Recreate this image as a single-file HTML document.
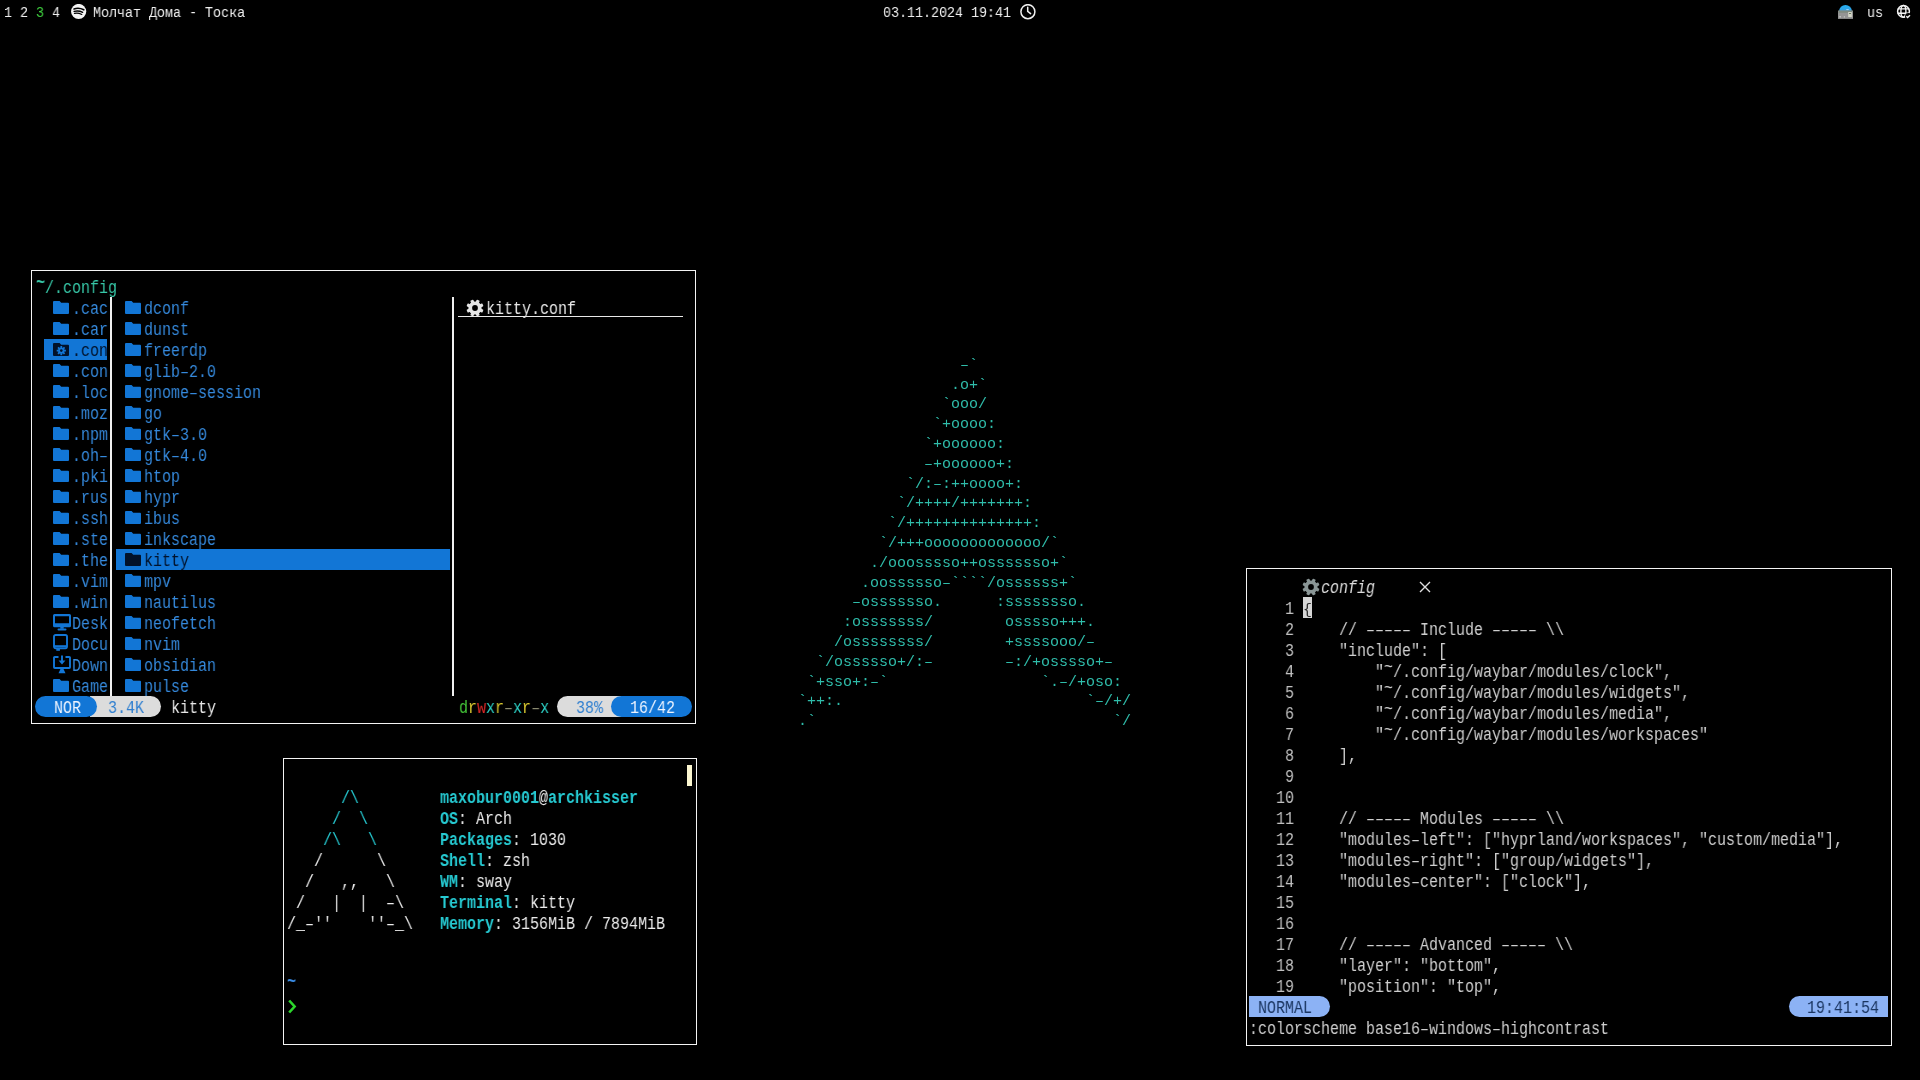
<!DOCTYPE html>
<html><head><meta charset="utf-8"><title>desktop</title>
<style>
html,body{margin:0;padding:0;background:#000;}
body{width:1920px;height:1080px;overflow:hidden;position:relative;font-family:"Liberation Mono", monospace;}
.t{position:absolute;white-space:pre;will-change:transform;font-family:"Liberation Mono", monospace;}
</style></head><body>

<div class="t" style="left:4px;top:1px;color:#f0f0f0;font-size:14.5px;line-height:24px;transform:scaleX(0.9195);transform-origin:0 0;">1 2 <span style="color:#3fd23f">3</span> 4</div>
<div class="t" style="left:93px;top:1px;color:#f0f0f0;font-size:14.5px;line-height:24px;transform:scaleX(0.9195);transform-origin:0 0;">Молчат Дома - Тоска</div>
<svg style="position:absolute;left:71px;top:4px;" width="16" height="16" viewBox="0 0 16 16"><circle cx="7.65" cy="7.5" r="7.6" fill="#f4f4f4"/><path d="M3 4.9 Q8 3.2 12.8 5.8" stroke="#000" stroke-width="1.6" fill="none" stroke-linecap="round"/><path d="M3.1 7.4 Q7.5 6.2 11.7 8.3" stroke="#000" stroke-width="1.35" fill="none" stroke-linecap="round"/><path d="M3.4 9.4 Q7 8.4 10.8 10.4" stroke="#000" stroke-width="1.15" fill="none" stroke-linecap="round"/></svg>
<div class="t" style="left:883px;top:1px;color:#f0f0f0;font-size:14.5px;line-height:24px;transform:scaleX(0.9195);transform-origin:0 0;">03.11.2024 19:41</div>
<svg style="position:absolute;left:1020px;top:4px;" width="16" height="16" viewBox="0 0 16 16"><circle cx="7.9" cy="7.65" r="7.0" stroke="#f0f0f0" stroke-width="1.5" fill="none"/><path d="M7.7 3.2 V7.3 L10.6 9.6" stroke="#f0f0f0" stroke-width="1.5" fill="none" stroke-linecap="round"/></svg>
<svg style="position:absolute;left:1837px;top:3px;" width="17" height="17" viewBox="0 0 17 17"><defs><linearGradient id="sky" x1="0" y1="0" x2="0" y2="1"><stop offset="0" stop-color="#22aef0"/><stop offset="1" stop-color="#4a8fd0"/></linearGradient></defs><circle cx="8.5" cy="8.4" r="6.4" fill="url(#sky)"/><ellipse cx="10.5" cy="6.6" rx="1.6" ry="0.6" fill="#9cd0f8"/><rect x="1" y="7.6" width="15" height="8.3" fill="#949494"/><rect x="1.5" y="7.6" width="14" height="2.2" fill="#7f8a80"/><rect x="11.2" y="9" width="3.6" height="5" fill="#d4d6c8"/><rect x="12" y="10" width="2" height="1" fill="#6a7a60"/><rect x="2.5" y="13.2" width="1.2" height="1.2" fill="#e0e0e0"/><rect x="6.8" y="13.4" width="1.2" height="1" fill="#d0d0d0"/></svg>
<div class="t" style="left:1867px;top:1px;color:#f0f0f0;font-size:14.5px;line-height:24px;transform:scaleX(0.9195);transform-origin:0 0;">us</div>
<svg style="position:absolute;left:1894px;top:2px;" width="20" height="20" viewBox="0 0 20 20"><circle cx="9.5" cy="9.35" r="5.9" stroke="#f4f4f4" stroke-width="1.5" fill="none"/><ellipse cx="9.4" cy="9.35" rx="2.5" ry="5.9" stroke="#f4f4f4" stroke-width="1.4" fill="none"/><path d="M3.8 6.9 H15.2 M3.6 11.3 H15.4" stroke="#f4f4f4" stroke-width="1.4"/><circle cx="14.4" cy="14.4" r="3.3" fill="#000"/><path d="M12.3 14.3 L13.6 15.6 L16 13.2" stroke="#f4f4f4" stroke-width="1.4" fill="none"/></svg>
<div style="position:absolute;left:31px;top:270px;width:665px;height:454px;box-sizing:border-box;border:1px solid #f4f4f4;"></div>
<div class="t" style="left:36px;top:278px;color:#37c8a8;font-size:17.5px;line-height:21px;transform:scaleX(0.85714);transform-origin:0 0;"><span style="position:relative;top:-5px;font-weight:bold">~</span>/.config</div>
<svg style="position:absolute;left:53px;top:301px;" width="16" height="13" viewBox="0 0 16 13"><path d="M0 1 Q0 0 1 0 H6.6 L8.2 1.8 H15 Q16 1.8 16 2.8 V12 Q16 13 15 13 H1 Q0 13 0 12 Z" fill="#1276d6"/></svg>
<div class="t" style="left:72px;top:299px;color:#3589dc;font-size:17.5px;line-height:21px;transform:scaleX(0.85714);transform-origin:0 0;">.cac</div>
<svg style="position:absolute;left:53px;top:322px;" width="16" height="13" viewBox="0 0 16 13"><path d="M0 1 Q0 0 1 0 H6.6 L8.2 1.8 H15 Q16 1.8 16 2.8 V12 Q16 13 15 13 H1 Q0 13 0 12 Z" fill="#1276d6"/></svg>
<div class="t" style="left:72px;top:320px;color:#3589dc;font-size:17.5px;line-height:21px;transform:scaleX(0.85714);transform-origin:0 0;">.car</div>
<div style="position:absolute;left:44px;top:339px;width:63px;height:21px;background:#1276d6;"></div>
<svg style="position:absolute;left:53px;top:343px;" width="16" height="14" viewBox="0 0 16 14"><path d="M0 1 Q0 0 1 0 H6.6 L8.2 1.8 H15 Q16 1.8 16 2.8 V12 Q16 13 15 13 H1 Q0 13 0 12 Z" fill="#02122a"/><g transform="translate(8.3 7.6)"><circle r="3.2" fill="#1276d6"/><rect x="-0.9" y="-4.6" width="1.8" height="2" fill="#1276d6" transform="rotate(0)"/><rect x="-0.9" y="-4.6" width="1.8" height="2" fill="#1276d6" transform="rotate(45)"/><rect x="-0.9" y="-4.6" width="1.8" height="2" fill="#1276d6" transform="rotate(90)"/><rect x="-0.9" y="-4.6" width="1.8" height="2" fill="#1276d6" transform="rotate(135)"/><rect x="-0.9" y="-4.6" width="1.8" height="2" fill="#1276d6" transform="rotate(180)"/><rect x="-0.9" y="-4.6" width="1.8" height="2" fill="#1276d6" transform="rotate(225)"/><rect x="-0.9" y="-4.6" width="1.8" height="2" fill="#1276d6" transform="rotate(270)"/><rect x="-0.9" y="-4.6" width="1.8" height="2" fill="#1276d6" transform="rotate(315)"/><circle r="1.3" fill="#02122a"/></g></svg>
<div class="t" style="left:72px;top:341px;color:#02122a;font-size:17.5px;line-height:21px;transform:scaleX(0.85714);transform-origin:0 0;">.con</div>
<svg style="position:absolute;left:53px;top:364px;" width="16" height="13" viewBox="0 0 16 13"><path d="M0 1 Q0 0 1 0 H6.6 L8.2 1.8 H15 Q16 1.8 16 2.8 V12 Q16 13 15 13 H1 Q0 13 0 12 Z" fill="#1276d6"/></svg>
<div class="t" style="left:72px;top:362px;color:#3589dc;font-size:17.5px;line-height:21px;transform:scaleX(0.85714);transform-origin:0 0;">.con</div>
<svg style="position:absolute;left:53px;top:385px;" width="16" height="13" viewBox="0 0 16 13"><path d="M0 1 Q0 0 1 0 H6.6 L8.2 1.8 H15 Q16 1.8 16 2.8 V12 Q16 13 15 13 H1 Q0 13 0 12 Z" fill="#1276d6"/></svg>
<div class="t" style="left:72px;top:383px;color:#3589dc;font-size:17.5px;line-height:21px;transform:scaleX(0.85714);transform-origin:0 0;">.loc</div>
<svg style="position:absolute;left:53px;top:406px;" width="16" height="13" viewBox="0 0 16 13"><path d="M0 1 Q0 0 1 0 H6.6 L8.2 1.8 H15 Q16 1.8 16 2.8 V12 Q16 13 15 13 H1 Q0 13 0 12 Z" fill="#1276d6"/></svg>
<div class="t" style="left:72px;top:404px;color:#3589dc;font-size:17.5px;line-height:21px;transform:scaleX(0.85714);transform-origin:0 0;">.moz</div>
<svg style="position:absolute;left:53px;top:427px;" width="16" height="13" viewBox="0 0 16 13"><path d="M0 1 Q0 0 1 0 H6.6 L8.2 1.8 H15 Q16 1.8 16 2.8 V12 Q16 13 15 13 H1 Q0 13 0 12 Z" fill="#1276d6"/></svg>
<div class="t" style="left:72px;top:425px;color:#3589dc;font-size:17.5px;line-height:21px;transform:scaleX(0.85714);transform-origin:0 0;">.npm</div>
<svg style="position:absolute;left:53px;top:448px;" width="16" height="13" viewBox="0 0 16 13"><path d="M0 1 Q0 0 1 0 H6.6 L8.2 1.8 H15 Q16 1.8 16 2.8 V12 Q16 13 15 13 H1 Q0 13 0 12 Z" fill="#1276d6"/></svg>
<div class="t" style="left:72px;top:446px;color:#3589dc;font-size:17.5px;line-height:21px;transform:scaleX(0.85714);transform-origin:0 0;">.oh–</div>
<svg style="position:absolute;left:53px;top:469px;" width="16" height="13" viewBox="0 0 16 13"><path d="M0 1 Q0 0 1 0 H6.6 L8.2 1.8 H15 Q16 1.8 16 2.8 V12 Q16 13 15 13 H1 Q0 13 0 12 Z" fill="#1276d6"/></svg>
<div class="t" style="left:72px;top:467px;color:#3589dc;font-size:17.5px;line-height:21px;transform:scaleX(0.85714);transform-origin:0 0;">.pki</div>
<svg style="position:absolute;left:53px;top:490px;" width="16" height="13" viewBox="0 0 16 13"><path d="M0 1 Q0 0 1 0 H6.6 L8.2 1.8 H15 Q16 1.8 16 2.8 V12 Q16 13 15 13 H1 Q0 13 0 12 Z" fill="#1276d6"/></svg>
<div class="t" style="left:72px;top:488px;color:#3589dc;font-size:17.5px;line-height:21px;transform:scaleX(0.85714);transform-origin:0 0;">.rus</div>
<svg style="position:absolute;left:53px;top:511px;" width="16" height="13" viewBox="0 0 16 13"><path d="M0 1 Q0 0 1 0 H6.6 L8.2 1.8 H15 Q16 1.8 16 2.8 V12 Q16 13 15 13 H1 Q0 13 0 12 Z" fill="#1276d6"/></svg>
<div class="t" style="left:72px;top:509px;color:#3589dc;font-size:17.5px;line-height:21px;transform:scaleX(0.85714);transform-origin:0 0;">.ssh</div>
<svg style="position:absolute;left:53px;top:532px;" width="16" height="13" viewBox="0 0 16 13"><path d="M0 1 Q0 0 1 0 H6.6 L8.2 1.8 H15 Q16 1.8 16 2.8 V12 Q16 13 15 13 H1 Q0 13 0 12 Z" fill="#1276d6"/></svg>
<div class="t" style="left:72px;top:530px;color:#3589dc;font-size:17.5px;line-height:21px;transform:scaleX(0.85714);transform-origin:0 0;">.ste</div>
<svg style="position:absolute;left:53px;top:553px;" width="16" height="13" viewBox="0 0 16 13"><path d="M0 1 Q0 0 1 0 H6.6 L8.2 1.8 H15 Q16 1.8 16 2.8 V12 Q16 13 15 13 H1 Q0 13 0 12 Z" fill="#1276d6"/></svg>
<div class="t" style="left:72px;top:551px;color:#3589dc;font-size:17.5px;line-height:21px;transform:scaleX(0.85714);transform-origin:0 0;">.the</div>
<svg style="position:absolute;left:53px;top:574px;" width="16" height="13" viewBox="0 0 16 13"><path d="M0 1 Q0 0 1 0 H6.6 L8.2 1.8 H15 Q16 1.8 16 2.8 V12 Q16 13 15 13 H1 Q0 13 0 12 Z" fill="#1276d6"/></svg>
<div class="t" style="left:72px;top:572px;color:#3589dc;font-size:17.5px;line-height:21px;transform:scaleX(0.85714);transform-origin:0 0;">.vim</div>
<svg style="position:absolute;left:53px;top:595px;" width="16" height="13" viewBox="0 0 16 13"><path d="M0 1 Q0 0 1 0 H6.6 L8.2 1.8 H15 Q16 1.8 16 2.8 V12 Q16 13 15 13 H1 Q0 13 0 12 Z" fill="#1276d6"/></svg>
<div class="t" style="left:72px;top:593px;color:#3589dc;font-size:17.5px;line-height:21px;transform:scaleX(0.85714);transform-origin:0 0;">.win</div>
<svg style="position:absolute;left:53px;top:614px;" width="18" height="17" viewBox="0 0 18 17"><path fill-rule="evenodd" d="M1.5 0 H16.5 Q18 0 18 1.5 V11.7 Q18 13.2 16.5 13.2 H1.5 Q0 13.2 0 11.7 V1.5 Q0 0 1.5 0 Z M2 2.2 V9.2 H16 V2.2 Z" fill="#1276d6"/><rect x="7.3" y="13" width="3.4" height="1.8" fill="#1276d6"/><rect x="4.5" y="14.6" width="9" height="2" rx="1" fill="#1276d6"/></svg>
<div class="t" style="left:72px;top:614px;color:#3589dc;font-size:17.5px;line-height:21px;transform:scaleX(0.85714);transform-origin:0 0;">Desk</div>
<svg style="position:absolute;left:53px;top:634px;" width="18" height="18" viewBox="0 0 18 18"><rect x="1" y="1" width="13" height="13.2" rx="1.6" fill="none" stroke="#1276d6" stroke-width="1.9"/><rect x="1" y="11.2" width="13" height="1.8" fill="#1276d6"/><rect x="3.3" y="14.4" width="3.6" height="2.4" fill="#1276d6"/></svg>
<div class="t" style="left:72px;top:635px;color:#3589dc;font-size:17.5px;line-height:21px;transform:scaleX(0.85714);transform-origin:0 0;">Docu</div>
<svg style="position:absolute;left:53px;top:655px;" width="18" height="19" viewBox="0 0 18 19"><path d="M5.5 2 H1.8 Q1 2 1 2.8 V12.2 Q1 13 1.8 13 H16.2 Q17 13 17 12.2 V2.8 Q17 2 16.2 2 H12.5" fill="none" stroke="#1276d6" stroke-width="1.9"/><path d="M9 0.5 V7.5" stroke="#1276d6" stroke-width="1.9"/><path d="M5.6 5.6 L9 9.4 L12.4 5.6 Z" fill="#1276d6"/><path d="M5.5 18.2 H12.5 L10.3 13.5 H7.7 Z" fill="#1276d6"/></svg>
<div class="t" style="left:72px;top:656px;color:#3589dc;font-size:17.5px;line-height:21px;transform:scaleX(0.85714);transform-origin:0 0;">Down</div>
<svg style="position:absolute;left:53px;top:679px;" width="16" height="13" viewBox="0 0 16 13"><path d="M0 1 Q0 0 1 0 H6.6 L8.2 1.8 H15 Q16 1.8 16 2.8 V12 Q16 13 15 13 H1 Q0 13 0 12 Z" fill="#1276d6"/></svg>
<div class="t" style="left:72px;top:677px;color:#3589dc;font-size:17.5px;line-height:21px;transform:scaleX(0.85714);transform-origin:0 0;">Game</div>
<div style="position:absolute;left:110px;top:297px;width:2px;height:399px;background:#f0f0f0;"></div>
<div style="position:absolute;left:452px;top:297px;width:2px;height:399px;background:#f0f0f0;"></div>
<svg style="position:absolute;left:125px;top:301px;" width="16" height="13" viewBox="0 0 16 13"><path d="M0 1 Q0 0 1 0 H6.6 L8.2 1.8 H15 Q16 1.8 16 2.8 V12 Q16 13 15 13 H1 Q0 13 0 12 Z" fill="#1276d6"/></svg>
<div class="t" style="left:144px;top:299px;color:#3589dc;font-size:17.5px;line-height:21px;transform:scaleX(0.85714);transform-origin:0 0;">dconf</div>
<svg style="position:absolute;left:125px;top:322px;" width="16" height="13" viewBox="0 0 16 13"><path d="M0 1 Q0 0 1 0 H6.6 L8.2 1.8 H15 Q16 1.8 16 2.8 V12 Q16 13 15 13 H1 Q0 13 0 12 Z" fill="#1276d6"/></svg>
<div class="t" style="left:144px;top:320px;color:#3589dc;font-size:17.5px;line-height:21px;transform:scaleX(0.85714);transform-origin:0 0;">dunst</div>
<svg style="position:absolute;left:125px;top:343px;" width="16" height="13" viewBox="0 0 16 13"><path d="M0 1 Q0 0 1 0 H6.6 L8.2 1.8 H15 Q16 1.8 16 2.8 V12 Q16 13 15 13 H1 Q0 13 0 12 Z" fill="#1276d6"/></svg>
<div class="t" style="left:144px;top:341px;color:#3589dc;font-size:17.5px;line-height:21px;transform:scaleX(0.85714);transform-origin:0 0;">freerdp</div>
<svg style="position:absolute;left:125px;top:364px;" width="16" height="13" viewBox="0 0 16 13"><path d="M0 1 Q0 0 1 0 H6.6 L8.2 1.8 H15 Q16 1.8 16 2.8 V12 Q16 13 15 13 H1 Q0 13 0 12 Z" fill="#1276d6"/></svg>
<div class="t" style="left:144px;top:362px;color:#3589dc;font-size:17.5px;line-height:21px;transform:scaleX(0.85714);transform-origin:0 0;">glib–2.0</div>
<svg style="position:absolute;left:125px;top:385px;" width="16" height="13" viewBox="0 0 16 13"><path d="M0 1 Q0 0 1 0 H6.6 L8.2 1.8 H15 Q16 1.8 16 2.8 V12 Q16 13 15 13 H1 Q0 13 0 12 Z" fill="#1276d6"/></svg>
<div class="t" style="left:144px;top:383px;color:#3589dc;font-size:17.5px;line-height:21px;transform:scaleX(0.85714);transform-origin:0 0;">gnome–session</div>
<svg style="position:absolute;left:125px;top:406px;" width="16" height="13" viewBox="0 0 16 13"><path d="M0 1 Q0 0 1 0 H6.6 L8.2 1.8 H15 Q16 1.8 16 2.8 V12 Q16 13 15 13 H1 Q0 13 0 12 Z" fill="#1276d6"/></svg>
<div class="t" style="left:144px;top:404px;color:#3589dc;font-size:17.5px;line-height:21px;transform:scaleX(0.85714);transform-origin:0 0;">go</div>
<svg style="position:absolute;left:125px;top:427px;" width="16" height="13" viewBox="0 0 16 13"><path d="M0 1 Q0 0 1 0 H6.6 L8.2 1.8 H15 Q16 1.8 16 2.8 V12 Q16 13 15 13 H1 Q0 13 0 12 Z" fill="#1276d6"/></svg>
<div class="t" style="left:144px;top:425px;color:#3589dc;font-size:17.5px;line-height:21px;transform:scaleX(0.85714);transform-origin:0 0;">gtk–3.0</div>
<svg style="position:absolute;left:125px;top:448px;" width="16" height="13" viewBox="0 0 16 13"><path d="M0 1 Q0 0 1 0 H6.6 L8.2 1.8 H15 Q16 1.8 16 2.8 V12 Q16 13 15 13 H1 Q0 13 0 12 Z" fill="#1276d6"/></svg>
<div class="t" style="left:144px;top:446px;color:#3589dc;font-size:17.5px;line-height:21px;transform:scaleX(0.85714);transform-origin:0 0;">gtk–4.0</div>
<svg style="position:absolute;left:125px;top:469px;" width="16" height="13" viewBox="0 0 16 13"><path d="M0 1 Q0 0 1 0 H6.6 L8.2 1.8 H15 Q16 1.8 16 2.8 V12 Q16 13 15 13 H1 Q0 13 0 12 Z" fill="#1276d6"/></svg>
<div class="t" style="left:144px;top:467px;color:#3589dc;font-size:17.5px;line-height:21px;transform:scaleX(0.85714);transform-origin:0 0;">htop</div>
<svg style="position:absolute;left:125px;top:490px;" width="16" height="13" viewBox="0 0 16 13"><path d="M0 1 Q0 0 1 0 H6.6 L8.2 1.8 H15 Q16 1.8 16 2.8 V12 Q16 13 15 13 H1 Q0 13 0 12 Z" fill="#1276d6"/></svg>
<div class="t" style="left:144px;top:488px;color:#3589dc;font-size:17.5px;line-height:21px;transform:scaleX(0.85714);transform-origin:0 0;">hypr</div>
<svg style="position:absolute;left:125px;top:511px;" width="16" height="13" viewBox="0 0 16 13"><path d="M0 1 Q0 0 1 0 H6.6 L8.2 1.8 H15 Q16 1.8 16 2.8 V12 Q16 13 15 13 H1 Q0 13 0 12 Z" fill="#1276d6"/></svg>
<div class="t" style="left:144px;top:509px;color:#3589dc;font-size:17.5px;line-height:21px;transform:scaleX(0.85714);transform-origin:0 0;">ibus</div>
<svg style="position:absolute;left:125px;top:532px;" width="16" height="13" viewBox="0 0 16 13"><path d="M0 1 Q0 0 1 0 H6.6 L8.2 1.8 H15 Q16 1.8 16 2.8 V12 Q16 13 15 13 H1 Q0 13 0 12 Z" fill="#1276d6"/></svg>
<div class="t" style="left:144px;top:530px;color:#3589dc;font-size:17.5px;line-height:21px;transform:scaleX(0.85714);transform-origin:0 0;">inkscape</div>
<div style="position:absolute;left:116px;top:549px;width:334px;height:21px;background:#1276d6;"></div>
<svg style="position:absolute;left:125px;top:553px;" width="16" height="13" viewBox="0 0 16 13"><path d="M0 1 Q0 0 1 0 H6.6 L8.2 1.8 H15 Q16 1.8 16 2.8 V12 Q16 13 15 13 H1 Q0 13 0 12 Z" fill="#02122a"/></svg>
<div class="t" style="left:144px;top:551px;color:#02122a;font-size:17.5px;line-height:21px;transform:scaleX(0.85714);transform-origin:0 0;">kitty</div>
<svg style="position:absolute;left:125px;top:574px;" width="16" height="13" viewBox="0 0 16 13"><path d="M0 1 Q0 0 1 0 H6.6 L8.2 1.8 H15 Q16 1.8 16 2.8 V12 Q16 13 15 13 H1 Q0 13 0 12 Z" fill="#1276d6"/></svg>
<div class="t" style="left:144px;top:572px;color:#3589dc;font-size:17.5px;line-height:21px;transform:scaleX(0.85714);transform-origin:0 0;">mpv</div>
<svg style="position:absolute;left:125px;top:595px;" width="16" height="13" viewBox="0 0 16 13"><path d="M0 1 Q0 0 1 0 H6.6 L8.2 1.8 H15 Q16 1.8 16 2.8 V12 Q16 13 15 13 H1 Q0 13 0 12 Z" fill="#1276d6"/></svg>
<div class="t" style="left:144px;top:593px;color:#3589dc;font-size:17.5px;line-height:21px;transform:scaleX(0.85714);transform-origin:0 0;">nautilus</div>
<svg style="position:absolute;left:125px;top:616px;" width="16" height="13" viewBox="0 0 16 13"><path d="M0 1 Q0 0 1 0 H6.6 L8.2 1.8 H15 Q16 1.8 16 2.8 V12 Q16 13 15 13 H1 Q0 13 0 12 Z" fill="#1276d6"/></svg>
<div class="t" style="left:144px;top:614px;color:#3589dc;font-size:17.5px;line-height:21px;transform:scaleX(0.85714);transform-origin:0 0;">neofetch</div>
<svg style="position:absolute;left:125px;top:637px;" width="16" height="13" viewBox="0 0 16 13"><path d="M0 1 Q0 0 1 0 H6.6 L8.2 1.8 H15 Q16 1.8 16 2.8 V12 Q16 13 15 13 H1 Q0 13 0 12 Z" fill="#1276d6"/></svg>
<div class="t" style="left:144px;top:635px;color:#3589dc;font-size:17.5px;line-height:21px;transform:scaleX(0.85714);transform-origin:0 0;">nvim</div>
<svg style="position:absolute;left:125px;top:658px;" width="16" height="13" viewBox="0 0 16 13"><path d="M0 1 Q0 0 1 0 H6.6 L8.2 1.8 H15 Q16 1.8 16 2.8 V12 Q16 13 15 13 H1 Q0 13 0 12 Z" fill="#1276d6"/></svg>
<div class="t" style="left:144px;top:656px;color:#3589dc;font-size:17.5px;line-height:21px;transform:scaleX(0.85714);transform-origin:0 0;">obsidian</div>
<svg style="position:absolute;left:125px;top:679px;" width="16" height="13" viewBox="0 0 16 13"><path d="M0 1 Q0 0 1 0 H6.6 L8.2 1.8 H15 Q16 1.8 16 2.8 V12 Q16 13 15 13 H1 Q0 13 0 12 Z" fill="#1276d6"/></svg>
<div class="t" style="left:144px;top:677px;color:#3589dc;font-size:17.5px;line-height:21px;transform:scaleX(0.85714);transform-origin:0 0;">pulse</div>
<svg style="position:absolute;left:465.3px;top:297.6px;" width="20" height="20" viewBox="0 0 20 20"><g transform="translate(10 10)"><circle r="6.6" fill="#e6e6e6"/><rect x="-1.65" y="-8.5" width="3.3" height="3.1000000000000005" rx="0.7" fill="#e6e6e6" transform="rotate(22.5)"/><rect x="-1.65" y="-8.5" width="3.3" height="3.1000000000000005" rx="0.7" fill="#e6e6e6" transform="rotate(67.5)"/><rect x="-1.65" y="-8.5" width="3.3" height="3.1000000000000005" rx="0.7" fill="#e6e6e6" transform="rotate(112.5)"/><rect x="-1.65" y="-8.5" width="3.3" height="3.1000000000000005" rx="0.7" fill="#e6e6e6" transform="rotate(157.5)"/><rect x="-1.65" y="-8.5" width="3.3" height="3.1000000000000005" rx="0.7" fill="#e6e6e6" transform="rotate(202.5)"/><rect x="-1.65" y="-8.5" width="3.3" height="3.1000000000000005" rx="0.7" fill="#e6e6e6" transform="rotate(247.5)"/><rect x="-1.65" y="-8.5" width="3.3" height="3.1000000000000005" rx="0.7" fill="#e6e6e6" transform="rotate(292.5)"/><rect x="-1.65" y="-8.5" width="3.3" height="3.1000000000000005" rx="0.7" fill="#e6e6e6" transform="rotate(337.5)"/><circle r="2.9" fill="#000"/></g></svg>
<div class="t" style="left:486px;top:299px;color:#e8e8e8;font-size:17.5px;line-height:21px;transform:scaleX(0.85714);transform-origin:0 0;">kitty.conf</div>
<div style="position:absolute;left:458px;top:316px;width:225px;height:1px;background:#e8e8e8;"></div>
<div style="position:absolute;left:90px;top:696px;width:71px;height:21px;background:#dcdcdc;border-radius:0 10.5px 10.5px 0;"></div>
<div style="position:absolute;left:35px;top:696px;width:62px;height:21px;background:#1276d6;border-radius:10.5px;"></div>
<div class="t" style="left:54px;top:698px;color:#eef4ff;font-size:17.5px;line-height:21px;transform:scaleX(0.85714);transform-origin:0 0;">NOR</div>
<div class="t" style="left:108px;top:698px;color:#2f7fd0;font-size:17.5px;line-height:21px;transform:scaleX(0.85714);transform-origin:0 0;">3.4K</div>
<div class="t" style="left:171px;top:698px;color:#e8e8e8;font-size:17.5px;line-height:21px;transform:scaleX(0.85714);transform-origin:0 0;">kitty</div>
<div class="t" style="left:459px;top:698px;color:#e0e0e0;font-size:17.5px;line-height:21px;transform:scaleX(0.85714);transform-origin:0 0;"><span style="color:#45c83a">d</span><span style="color:#d8c830">r</span><span style="color:#e02828">w</span><span style="color:#2ccfc4">x</span><span style="color:#d8c830">r</span><span style="color:#8a8a70">–</span><span style="color:#2ccfc4">x</span><span style="color:#d8c830">r</span><span style="color:#8a8a70">–</span><span style="color:#2ccfc4">x</span></div>
<div style="position:absolute;left:557px;top:696px;width:70px;height:21px;background:#dcdcdc;border-radius:10.5px 0 0 10.5px;"></div>
<div style="position:absolute;left:611px;top:696px;width:81px;height:21px;background:#1276d6;border-radius:10.5px;"></div>
<div class="t" style="left:576px;top:698px;color:#2f7fd0;font-size:17.5px;line-height:21px;transform:scaleX(0.85714);transform-origin:0 0;">38%</div>
<div class="t" style="left:630px;top:698px;color:#eef4ff;font-size:17.5px;line-height:21px;transform:scaleX(0.85714);transform-origin:0 0;">16/42</div>
<div class="t" style="left:789px;top:354.7px;color:#2fbcaa;font-size:15px;line-height:21px;">                   –`</div>
<div class="t" style="left:789px;top:374.5px;color:#2fbcaa;font-size:15px;line-height:21px;">                  .o+`</div>
<div class="t" style="left:789px;top:394.3px;color:#2fbcaa;font-size:15px;line-height:21px;">                 `ooo/</div>
<div class="t" style="left:789px;top:414.1px;color:#2fbcaa;font-size:15px;line-height:21px;">                `+oooo:</div>
<div class="t" style="left:789px;top:433.9px;color:#2fbcaa;font-size:15px;line-height:21px;">               `+oooooo:</div>
<div class="t" style="left:789px;top:453.7px;color:#2fbcaa;font-size:15px;line-height:21px;">               –+oooooo+:</div>
<div class="t" style="left:789px;top:473.5px;color:#2fbcaa;font-size:15px;line-height:21px;">             `/:–:++oooo+:</div>
<div class="t" style="left:789px;top:493.3px;color:#2fbcaa;font-size:15px;line-height:21px;">            `/++++/+++++++:</div>
<div class="t" style="left:789px;top:513.1px;color:#2fbcaa;font-size:15px;line-height:21px;">           `/++++++++++++++:</div>
<div class="t" style="left:789px;top:532.9px;color:#2fbcaa;font-size:15px;line-height:21px;">          `/+++ooooooooooooo/`</div>
<div class="t" style="left:789px;top:552.7px;color:#2fbcaa;font-size:15px;line-height:21px;">         ./ooosssso++osssssso+`</div>
<div class="t" style="left:789px;top:572.5px;color:#2fbcaa;font-size:15px;line-height:21px;">        .oossssso–````/ossssss+`</div>
<div class="t" style="left:789px;top:592.3px;color:#2fbcaa;font-size:15px;line-height:21px;">       –osssssso.      :ssssssso.</div>
<div class="t" style="left:789px;top:612.1px;color:#2fbcaa;font-size:15px;line-height:21px;">      :osssssss/        osssso+++.</div>
<div class="t" style="left:789px;top:631.9px;color:#2fbcaa;font-size:15px;line-height:21px;">     /ossssssss/        +ssssooo/–</div>
<div class="t" style="left:789px;top:651.7px;color:#2fbcaa;font-size:15px;line-height:21px;">   `/ossssso+/:–        –:/+osssso+–</div>
<div class="t" style="left:789px;top:671.5px;color:#2fbcaa;font-size:15px;line-height:21px;">  `+sso+:–`                 `.–/+oso:</div>
<div class="t" style="left:789px;top:691.3px;color:#2fbcaa;font-size:15px;line-height:21px;"> `++:.                           `–/+/</div>
<div class="t" style="left:789px;top:711.1px;color:#2fbcaa;font-size:15px;line-height:21px;"> .`                                 `/</div>
<div style="position:absolute;left:283px;top:758px;width:414px;height:287px;box-sizing:border-box;border:1px solid #f4f4f4;"></div>
<div style="position:absolute;left:687px;top:765px;width:5px;height:21px;background:#fbf6d0;"></div>
<div class="t" style="left:287px;top:788px;color:#26cad2;font-size:17.5px;line-height:21px;transform:scaleX(0.85714);transform-origin:0 0;">      /\</div>
<div class="t" style="left:287px;top:809px;color:#26cad2;font-size:17.5px;line-height:21px;transform:scaleX(0.85714);transform-origin:0 0;">     /  \</div>
<div class="t" style="left:287px;top:830px;color:#26cad2;font-size:17.5px;line-height:21px;transform:scaleX(0.85714);transform-origin:0 0;">    /\   \</div>
<div class="t" style="left:287px;top:851px;color:#ececec;font-size:17.5px;line-height:21px;transform:scaleX(0.85714);transform-origin:0 0;">   /      \</div>
<div class="t" style="left:287px;top:872px;color:#ececec;font-size:17.5px;line-height:21px;transform:scaleX(0.85714);transform-origin:0 0;">  /   ,,   \</div>
<div class="t" style="left:287px;top:893px;color:#ececec;font-size:17.5px;line-height:21px;transform:scaleX(0.85714);transform-origin:0 0;"> /   |  |  –\</div>
<div class="t" style="left:287px;top:914px;color:#ececec;font-size:17.5px;line-height:21px;transform:scaleX(0.85714);transform-origin:0 0;">/_–''    ''–_\</div>
<div class="t" style="left:440px;top:788px;color:#e0e0e0;font-size:17.5px;line-height:21px;transform:scaleX(0.85714);transform-origin:0 0;"><span style="color:#26cad2;font-weight:bold">maxobur0001</span><span style="color:#ececec">@</span><span style="color:#26cad2;font-weight:bold">archkisser</span></div>
<div class="t" style="left:440px;top:809px;color:#e0e0e0;font-size:17.5px;line-height:21px;transform:scaleX(0.85714);transform-origin:0 0;"><span style="color:#26cad2;font-weight:bold">OS</span><span style="color:#ececec">: Arch</span></div>
<div class="t" style="left:440px;top:830px;color:#e0e0e0;font-size:17.5px;line-height:21px;transform:scaleX(0.85714);transform-origin:0 0;"><span style="color:#26cad2;font-weight:bold">Packages</span><span style="color:#ececec">: 1030</span></div>
<div class="t" style="left:440px;top:851px;color:#e0e0e0;font-size:17.5px;line-height:21px;transform:scaleX(0.85714);transform-origin:0 0;"><span style="color:#26cad2;font-weight:bold">Shell</span><span style="color:#ececec">: zsh</span></div>
<div class="t" style="left:440px;top:872px;color:#e0e0e0;font-size:17.5px;line-height:21px;transform:scaleX(0.85714);transform-origin:0 0;"><span style="color:#26cad2;font-weight:bold">WM</span><span style="color:#ececec">: sway</span></div>
<div class="t" style="left:440px;top:893px;color:#e0e0e0;font-size:17.5px;line-height:21px;transform:scaleX(0.85714);transform-origin:0 0;"><span style="color:#26cad2;font-weight:bold">Terminal</span><span style="color:#ececec">: kitty</span></div>
<div class="t" style="left:440px;top:914px;color:#e0e0e0;font-size:17.5px;line-height:21px;transform:scaleX(0.85714);transform-origin:0 0;"><span style="color:#26cad2;font-weight:bold">Memory</span><span style="color:#ececec">: 3156MiB / 7894MiB</span></div>
<div class="t" style="left:287px;top:977px;color:#3b8ee8;font-size:17.5px;line-height:21px;transform:scaleX(0.85714);transform-origin:0 0;"><span style="position:relative;top:-5px;font-weight:bold">~</span></div>
<svg style="position:absolute;left:287px;top:999px;" width="10" height="15" viewBox="0 0 10 15"><path d="M2.2 1.5 L7.6 7.5 L2.2 13.5" stroke="#2cd62c" stroke-width="2.6" fill="none" stroke-linejoin="miter"/></svg>
<div style="position:absolute;left:1246px;top:568px;width:646px;height:478px;box-sizing:border-box;border:1px solid #f4f4f4;"></div>
<svg style="position:absolute;left:1301.1px;top:576.7px;" width="20" height="20" viewBox="0 0 20 20"><g transform="translate(10 10)"><circle r="6.6" fill="#8a9696"/><rect x="-1.65" y="-8.5" width="3.3" height="3.1000000000000005" rx="0.7" fill="#8a9696" transform="rotate(22.5)"/><rect x="-1.65" y="-8.5" width="3.3" height="3.1000000000000005" rx="0.7" fill="#8a9696" transform="rotate(67.5)"/><rect x="-1.65" y="-8.5" width="3.3" height="3.1000000000000005" rx="0.7" fill="#8a9696" transform="rotate(112.5)"/><rect x="-1.65" y="-8.5" width="3.3" height="3.1000000000000005" rx="0.7" fill="#8a9696" transform="rotate(157.5)"/><rect x="-1.65" y="-8.5" width="3.3" height="3.1000000000000005" rx="0.7" fill="#8a9696" transform="rotate(202.5)"/><rect x="-1.65" y="-8.5" width="3.3" height="3.1000000000000005" rx="0.7" fill="#8a9696" transform="rotate(247.5)"/><rect x="-1.65" y="-8.5" width="3.3" height="3.1000000000000005" rx="0.7" fill="#8a9696" transform="rotate(292.5)"/><rect x="-1.65" y="-8.5" width="3.3" height="3.1000000000000005" rx="0.7" fill="#8a9696" transform="rotate(337.5)"/><circle r="2.9" fill="#000"/></g></svg>
<div class="t" style="left:1321px;top:578px;color:#dcdcdc;font-size:17.5px;line-height:21px;transform:scaleX(0.85714);transform-origin:0 0;font-style:italic;">config</div>
<svg style="position:absolute;left:1419px;top:581px;" width="12" height="12" viewBox="0 0 12 12"><path d="M1 1 L11 11 M11 1 L1 11" stroke="#e0e0e0" stroke-width="1.4"/></svg>
<div class="t" style="left:1267px;top:599px;color:#c0c0c0;font-size:17.5px;line-height:21px;transform:scaleX(0.85714);transform-origin:0 0;">  1</div>
<div style="position:absolute;left:1303px;top:597px;width:9px;height:21px;background:#d6d6d6;overflow:hidden;"><div class="t" style="left:-0.5px;top:3px;color:#2a2a2a;font-size:15px;line-height:21px;">{</div></div>
<div class="t" style="left:1267px;top:620px;color:#c0c0c0;font-size:17.5px;line-height:21px;transform:scaleX(0.85714);transform-origin:0 0;">  2</div>
<div class="t" style="left:1303px;top:620px;color:#cfcfcf;font-size:17.5px;line-height:21px;transform:scaleX(0.85714);transform-origin:0 0;">    // ––––– Include ––––– \\</div>
<div class="t" style="left:1267px;top:641px;color:#c0c0c0;font-size:17.5px;line-height:21px;transform:scaleX(0.85714);transform-origin:0 0;">  3</div>
<div class="t" style="left:1303px;top:641px;color:#cfcfcf;font-size:17.5px;line-height:21px;transform:scaleX(0.85714);transform-origin:0 0;">    "include": [</div>
<div class="t" style="left:1267px;top:662px;color:#c0c0c0;font-size:17.5px;line-height:21px;transform:scaleX(0.85714);transform-origin:0 0;">  4</div>
<div class="t" style="left:1303px;top:662px;color:#cfcfcf;font-size:17.5px;line-height:21px;transform:scaleX(0.85714);transform-origin:0 0;">        "<span style="position:relative;top:-5px">~</span>/.config/waybar/modules/clock",</div>
<div class="t" style="left:1267px;top:683px;color:#c0c0c0;font-size:17.5px;line-height:21px;transform:scaleX(0.85714);transform-origin:0 0;">  5</div>
<div class="t" style="left:1303px;top:683px;color:#cfcfcf;font-size:17.5px;line-height:21px;transform:scaleX(0.85714);transform-origin:0 0;">        "<span style="position:relative;top:-5px">~</span>/.config/waybar/modules/widgets",</div>
<div class="t" style="left:1267px;top:704px;color:#c0c0c0;font-size:17.5px;line-height:21px;transform:scaleX(0.85714);transform-origin:0 0;">  6</div>
<div class="t" style="left:1303px;top:704px;color:#cfcfcf;font-size:17.5px;line-height:21px;transform:scaleX(0.85714);transform-origin:0 0;">        "<span style="position:relative;top:-5px">~</span>/.config/waybar/modules/media",</div>
<div class="t" style="left:1267px;top:725px;color:#c0c0c0;font-size:17.5px;line-height:21px;transform:scaleX(0.85714);transform-origin:0 0;">  7</div>
<div class="t" style="left:1303px;top:725px;color:#cfcfcf;font-size:17.5px;line-height:21px;transform:scaleX(0.85714);transform-origin:0 0;">        "<span style="position:relative;top:-5px">~</span>/.config/waybar/modules/workspaces"</div>
<div class="t" style="left:1267px;top:746px;color:#c0c0c0;font-size:17.5px;line-height:21px;transform:scaleX(0.85714);transform-origin:0 0;">  8</div>
<div class="t" style="left:1303px;top:746px;color:#cfcfcf;font-size:17.5px;line-height:21px;transform:scaleX(0.85714);transform-origin:0 0;">    ],</div>
<div class="t" style="left:1267px;top:767px;color:#c0c0c0;font-size:17.5px;line-height:21px;transform:scaleX(0.85714);transform-origin:0 0;">  9</div>
<div class="t" style="left:1303px;top:767px;color:#cfcfcf;font-size:17.5px;line-height:21px;transform:scaleX(0.85714);transform-origin:0 0;"></div>
<div class="t" style="left:1267px;top:788px;color:#c0c0c0;font-size:17.5px;line-height:21px;transform:scaleX(0.85714);transform-origin:0 0;"> 10</div>
<div class="t" style="left:1303px;top:788px;color:#cfcfcf;font-size:17.5px;line-height:21px;transform:scaleX(0.85714);transform-origin:0 0;"></div>
<div class="t" style="left:1267px;top:809px;color:#c0c0c0;font-size:17.5px;line-height:21px;transform:scaleX(0.85714);transform-origin:0 0;"> 11</div>
<div class="t" style="left:1303px;top:809px;color:#cfcfcf;font-size:17.5px;line-height:21px;transform:scaleX(0.85714);transform-origin:0 0;">    // ––––– Modules ––––– \\</div>
<div class="t" style="left:1267px;top:830px;color:#c0c0c0;font-size:17.5px;line-height:21px;transform:scaleX(0.85714);transform-origin:0 0;"> 12</div>
<div class="t" style="left:1303px;top:830px;color:#cfcfcf;font-size:17.5px;line-height:21px;transform:scaleX(0.85714);transform-origin:0 0;">    "modules–left": ["hyprland/workspaces", "custom/media"],</div>
<div class="t" style="left:1267px;top:851px;color:#c0c0c0;font-size:17.5px;line-height:21px;transform:scaleX(0.85714);transform-origin:0 0;"> 13</div>
<div class="t" style="left:1303px;top:851px;color:#cfcfcf;font-size:17.5px;line-height:21px;transform:scaleX(0.85714);transform-origin:0 0;">    "modules–right": ["group/widgets"],</div>
<div class="t" style="left:1267px;top:872px;color:#c0c0c0;font-size:17.5px;line-height:21px;transform:scaleX(0.85714);transform-origin:0 0;"> 14</div>
<div class="t" style="left:1303px;top:872px;color:#cfcfcf;font-size:17.5px;line-height:21px;transform:scaleX(0.85714);transform-origin:0 0;">    "modules–center": ["clock"],</div>
<div class="t" style="left:1267px;top:893px;color:#c0c0c0;font-size:17.5px;line-height:21px;transform:scaleX(0.85714);transform-origin:0 0;"> 15</div>
<div class="t" style="left:1303px;top:893px;color:#cfcfcf;font-size:17.5px;line-height:21px;transform:scaleX(0.85714);transform-origin:0 0;"></div>
<div class="t" style="left:1267px;top:914px;color:#c0c0c0;font-size:17.5px;line-height:21px;transform:scaleX(0.85714);transform-origin:0 0;"> 16</div>
<div class="t" style="left:1303px;top:914px;color:#cfcfcf;font-size:17.5px;line-height:21px;transform:scaleX(0.85714);transform-origin:0 0;"></div>
<div class="t" style="left:1267px;top:935px;color:#c0c0c0;font-size:17.5px;line-height:21px;transform:scaleX(0.85714);transform-origin:0 0;"> 17</div>
<div class="t" style="left:1303px;top:935px;color:#cfcfcf;font-size:17.5px;line-height:21px;transform:scaleX(0.85714);transform-origin:0 0;">    // ––––– Advanced ––––– \\</div>
<div class="t" style="left:1267px;top:956px;color:#c0c0c0;font-size:17.5px;line-height:21px;transform:scaleX(0.85714);transform-origin:0 0;"> 18</div>
<div class="t" style="left:1303px;top:956px;color:#cfcfcf;font-size:17.5px;line-height:21px;transform:scaleX(0.85714);transform-origin:0 0;">    "layer": "bottom",</div>
<div class="t" style="left:1267px;top:977px;color:#c0c0c0;font-size:17.5px;line-height:21px;transform:scaleX(0.85714);transform-origin:0 0;"> 19</div>
<div class="t" style="left:1303px;top:977px;color:#cfcfcf;font-size:17.5px;line-height:21px;transform:scaleX(0.85714);transform-origin:0 0;">    "position": "top",</div>
<div style="position:absolute;left:1249px;top:996px;width:81px;height:21px;background:#8cb2f5;border-radius:0 10.5px 10.5px 0;"></div>
<div class="t" style="left:1258px;top:998px;color:#1a3560;font-size:17.5px;line-height:21px;transform:scaleX(0.85714);transform-origin:0 0;">NORMAL</div>
<div style="position:absolute;left:1789px;top:996px;width:99px;height:21px;background:#8cb2f5;border-radius:10.5px 0 0 10.5px;"></div>
<div class="t" style="left:1807px;top:998px;color:#1a3560;font-size:17.5px;line-height:21px;transform:scaleX(0.85714);transform-origin:0 0;">19:41:54</div>
<div class="t" style="left:1249px;top:1019px;color:#cfcfcf;font-size:17.5px;line-height:21px;transform:scaleX(0.85714);transform-origin:0 0;">:colorscheme base16–windows–highcontrast</div>
</body></html>
